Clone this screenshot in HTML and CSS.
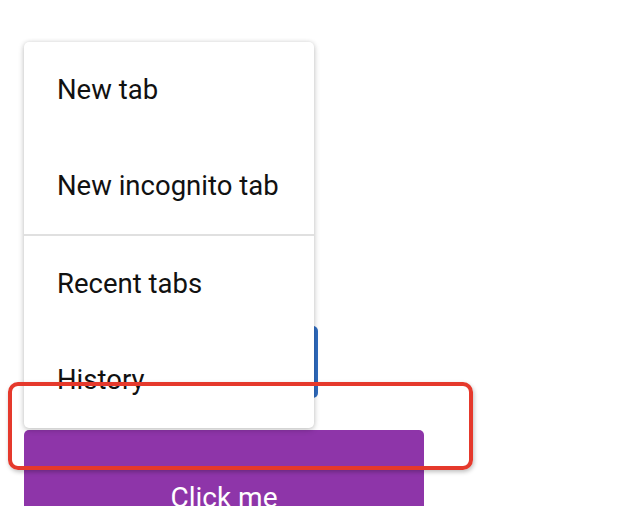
FILE: index.html
```html
<!DOCTYPE html>
<html>
<head>
<meta charset="utf-8">
<link rel="stylesheet" href="styles.css">
</head>
<body>
<div class="page">
  <div class="buttons">
    <button class="btn btn-blue">Menu</button>
    <button class="btn btn-purple">Click me</button>
  </div>
  <div class="menu">
    <div class="item">New tab</div>
    <div class="item">New incognito tab</div>
    <div class="divider"></div>
    <div class="item">Recent tabs</div>
    <div class="item">History</div>
  </div>
  <div class="highlight"></div>
</div>
</body>
</html>
```
FILE: styles.css
```css
html, body {
  margin: 0;
  padding: 0;
  background: #ffffff;
  overflow: hidden;
}
.page {
  position: relative;
  width: 644px;
  height: 506px;
  overflow: hidden;
  font-family: Roboto, "Noto Sans", sans-serif;
}
.buttons {
  display: flex;
  flex-direction: column;
  align-items: flex-start;
  gap: 32px;
  padding: 326px 0 0 24px;
}
.btn {
  border: none;
  border-radius: 5px;
  font-family: Roboto, sans-serif;
  font-size: 28px;
  color: #ffffff;
  margin: 0;
}
.btn-blue {
  width: 294px;
  height: 72px;
  background: #2f6cc0;
}
.btn-purple {
  width: 400px;
  height: 120px;
  background: #8e35a9;
  display: flex;
  justify-content: center;
  align-items: flex-start;
  padding-top: 54px;
  line-height: 1;
}
.menu {
  position: absolute;
  left: 24px;
  top: 42px;
  width: 290px;
  background: #ffffff;
  border-radius: 5px;
  box-shadow: 0 2px 6px rgba(0,0,0,0.2), 0 0 4px rgba(0,0,0,0.1);
}
.item {
  height: 96px;
  display: flex;
  align-items: center;
  padding-left: 33px;
  font-size: 27.5px;
  color: #111111;
  line-height: 1;
}
.divider {
  height: 2px;
  background: #e0e0e0;
}
.highlight {
  position: absolute;
  left: 8px;
  top: 382px;
  width: 457px;
  height: 80px;
  border: 4px solid #e5392c;
  border-radius: 10px;
  box-shadow: 1px 2px 4px rgba(0,0,0,0.25);
}
```
